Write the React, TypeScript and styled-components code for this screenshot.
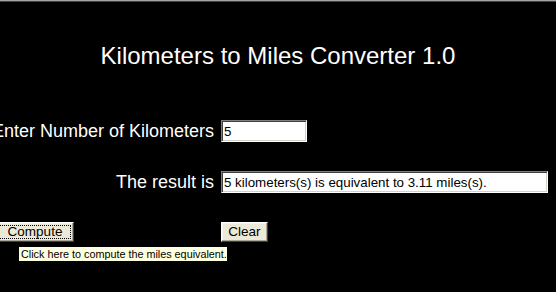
import React, { useState } from "react";
import styled, { createGlobalStyle } from "styled-components";

const GlobalStyle = createGlobalStyle`
  html, body {
    margin: 0;
    padding: 0;
    background: #000;
  }
  body {
    font-family: "Liberation Sans", Arial, sans-serif;
    color: #fff;
    overflow: hidden;
  }
`;

const Page = styled.div`
  min-height: 292px;
  background: #000;
  border-top: 1px solid #a3a3a3;
  box-shadow: inset 0 1px 0 #454545;
`;

const Title = styled.h1`
  margin: 41px 0 0;
  font-size: 24px;
  line-height: 28px;
  font-weight: normal;
  text-align: center;
  color: #fff;
`;

const Form = styled.div`
  display: grid;
  grid-template-columns: 222px auto;
  grid-template-rows: 22px 22px 20px;
  column-gap: 7px;
  row-gap: 29px;
  align-items: center;
  justify-items: start;
  margin: 50px 0 0 -8px;
`;

const Label = styled.label`
  justify-self: end;
  font-size: 18px;
  line-height: 22px;
  white-space: nowrap;
  color: #fff;
`;

const Field = styled.input<{ $width: number }>`
  box-sizing: border-box;
  width: ${(p) => p.$width}px;
  height: 22px;
  margin: 0;
  padding: 1px 2px 0;
  font-family: "Liberation Sans", Arial, sans-serif;
  font-size: 13.33px;
  color: #000;
  background: #fff;
  border-style: solid;
  border-width: 1px;
  border-color: #7f7f7f #ffffff #ffffff #7f7f7f;
  box-shadow: inset 1px 1px 0 #404040, inset -1px -1px 0 #d4d0c8;
  outline: none;
`;

const ButtonCell = styled.div<{ $offset?: number }>`
  position: relative;
  justify-self: start;
  margin-left: ${(p) => p.$offset ?? 0}px;
`;

const Button = styled.button<{ $width: number; $focused?: boolean }>`
  position: relative;
  box-sizing: border-box;
  width: ${(p) => p.$width}px;
  height: 20px;
  margin: 0;
  padding: 0;
  font-family: "Liberation Sans", Arial, sans-serif;
  font-size: 13.5px;
  line-height: 16px;
  color: #000;
  background: #ece9d8;
  border-style: solid;
  border-width: 1px;
  border-color: #ffffff #404040 #404040 #ffffff;
  box-shadow: inset -1px -1px 0 #aca899, inset 1px 1px 0 #f4f3ee;
  cursor: default;

  &::after {
    content: "";
    display: ${(p) => (p.$focused ? "block" : "none")};
    position: absolute;
    inset: 2px;
    border: 1px dotted #000;
  }
`;

const Tooltip = styled.div`
  position: absolute;
  top: 25px;
  left: 23px;
  width: 208px;
  height: 14px;
  box-sizing: border-box;
  padding: 0 0 0 2px;
  background: #ffffe1;
  color: #000;
  font-family: "Liberation Sans", Arial, sans-serif;
  font-size: 10.8px;
  line-height: 14px;
  white-space: nowrap;
`;

const KM_TO_MILES = 0.621371;

export default function App() {
  const [km, setKm] = useState("5");
  const [result, setResult] = useState(
    "5 kilometers(s) is equivalent to 3.11 miles(s)."
  );

  const compute = () => {
    const n = parseFloat(km);
    if (isNaN(n)) return;
    setResult(
      `${km} kilometers(s) is equivalent to ${(n * KM_TO_MILES).toFixed(2)} miles(s).`
    );
  };

  const clear = () => {
    setKm("");
    setResult("");
  };

  return (
    <>
      <GlobalStyle />
      <Page>
        <Title>Kilometers to Miles Converter 1.0</Title>
        <Form>
          <Label htmlFor="km">Enter Number of Kilometers</Label>
          <Field
            id="km"
            $width={86}
            value={km}
            onChange={(e) => setKm(e.target.value)}
          />

          <Label htmlFor="result">The result is</Label>
          <Field id="result" $width={327} value={result} readOnly />

          <ButtonCell $offset={4}>
            <Button $width={78} $focused onClick={compute}>
              Compute
            </Button>
            <Tooltip>Click here to compute the miles equivalent.</Tooltip>
          </ButtonCell>
          <ButtonCell>
            <Button $width={47} onClick={clear}>
              Clear
            </Button>
          </ButtonCell>
        </Form>
      </Page>
    </>
  );
}
